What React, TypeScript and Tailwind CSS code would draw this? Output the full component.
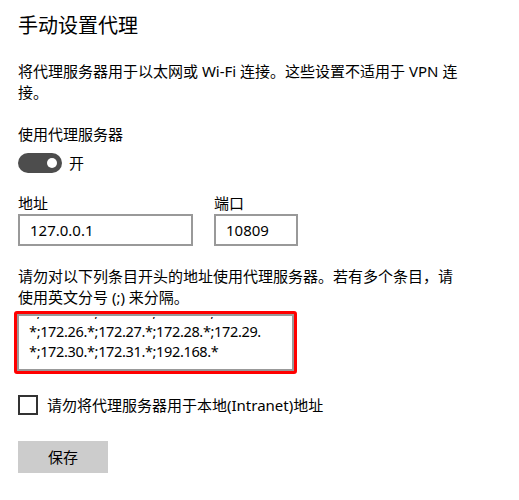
import { type ReactNode } from "react";

function FieldLabel({ children }: { children: ReactNode }) {
  return <div className="text-[15px] leading-[21px]">{children}</div>;
}

function TextField({ value, width }: { value: string; width: string }) {
  return (
    <div
      className={`flex h-8 items-center border-2 border-[#999999] bg-white px-[10px] text-[15px] ${width}`}
    >
      {value}
    </div>
  );
}

const bypassLines = [
  "*;172.22.*;172.23.*;172.24.*;172.25.",
  "*;172.26.*;172.27.*;172.28.*;172.29.",
  "*;172.30.*;172.31.*;192.168.*",
];

export default function App() {
  return (
    <div className="h-[500px] w-[519px] overflow-hidden bg-white px-[18px] pt-[12px] font-['Noto_Sans','Noto_Sans_CJK_SC',sans-serif] text-black">
      <h1 className="text-[20px] font-normal leading-[28px]">手动设置代理</h1>

      <p className="mt-[21px] w-[446px] text-[15px] leading-[21px]">
        将代理服务器用于以太网或 Wi-Fi 连接。这些设置不适用于 VPN 连接。
      </p>

      <div className="mt-[21px]">
        <FieldLabel>使用代理服务器</FieldLabel>
      </div>
      <div className="mt-2 flex items-center gap-[7px]">
        <div className="flex h-5 w-[44px] items-center justify-end rounded-full bg-[#4d4d4d] pr-[5px]">
          <div className="h-[10px] w-[10px] rounded-full bg-white" />
        </div>
        <span className="text-[15px] leading-5">开</span>
      </div>

      <div className="mt-5 flex gap-[21px]">
        <div>
          <FieldLabel>地址</FieldLabel>
          <TextField value="127.0.0.1" width="w-[175px]" />
        </div>
        <div>
          <FieldLabel>端口</FieldLabel>
          <TextField value="10809" width="w-[84px]" />
        </div>
      </div>

      <p className="mt-5 w-[446px] text-[15px] leading-[21px]">
        请勿对以下列条目开头的地址使用代理服务器。若有多个条目，请使用英文分号 (;) 来分隔。
      </p>

      <div className="mt-[3px] -ml-1 h-[63px] w-[283px] rounded-[3px] border-[3px] border-[#ff0000]">
        <div className="h-full border-2 border-[#999999] bg-white pl-[10px]">
          <div className="mt-px h-[calc(100%-1px)] overflow-hidden">
            <div className="mt-[-16px] text-[14.5px] leading-5 tracking-[-0.35px]">
              {bypassLines.map((line) => (
                <div key={line} className="whitespace-nowrap">
                  {line}
                </div>
              ))}
            </div>
          </div>
        </div>
      </div>

      <div className="mt-[21px] flex items-center gap-[9px]">
        <div className="h-5 w-5 border-2 border-[#333333]" />
        <span className="text-[15px] leading-5">
          请勿将代理服务器用于本地(Intranet)地址
        </span>
      </div>

      <button
        type="button"
        className="mt-[26px] flex h-8 w-[90px] items-center justify-center bg-[#cccccc] text-[15px]"
      >
        保存
      </button>
    </div>
  );
}
